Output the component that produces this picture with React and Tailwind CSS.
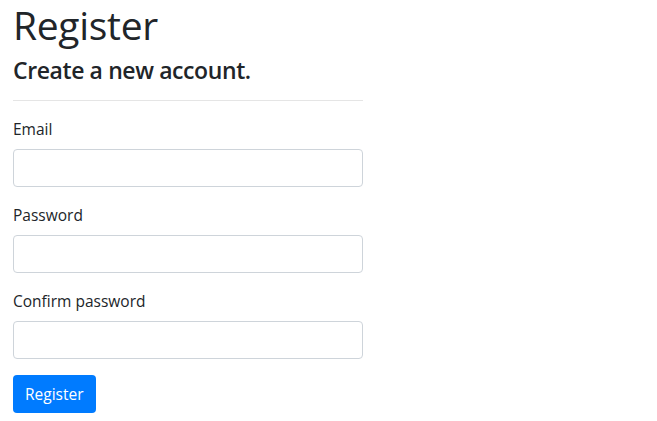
import React from 'react';

const FIELDS = [
  { id: 'email', label: 'Email', type: 'email' },
  { id: 'password', label: 'Password', type: 'password' },
  { id: 'confirm', label: 'Confirm password', type: 'password' },
];

export default function App() {
  return (
    <div className="min-h-screen bg-white px-[13px] pt-px text-[#212529] font-['Open_Sans',sans-serif]">
      <h1 className="mb-2 text-[39px] font-normal leading-[47px] tracking-[-0.3px]">Register</h1>
      <div className="w-[350px]">
        <h4 className="mb-2 text-[23px] font-semibold leading-[28px] tracking-[-0.4px]">Create a new account.</h4>
        <hr className="mt-4 mb-4 border-t border-black/10" />
        <form>
          {FIELDS.map((field) => (
            <div key={field.id} className="mb-4">
              <label htmlFor={field.id} className="mb-2 block text-[15.5px] leading-6">
                {field.label}
              </label>
              <input
                id={field.id}
                type={field.type}
                className="block h-[38px] w-full rounded border border-[#ced4da] bg-white px-3 text-base"
              />
            </div>
          ))}
          <button
            type="submit"
            className="h-[38px] rounded bg-[#007bff] px-3 text-[15.5px] leading-6 text-white"
          >
            Register
          </button>
        </form>
      </div>
    </div>
  );
}
